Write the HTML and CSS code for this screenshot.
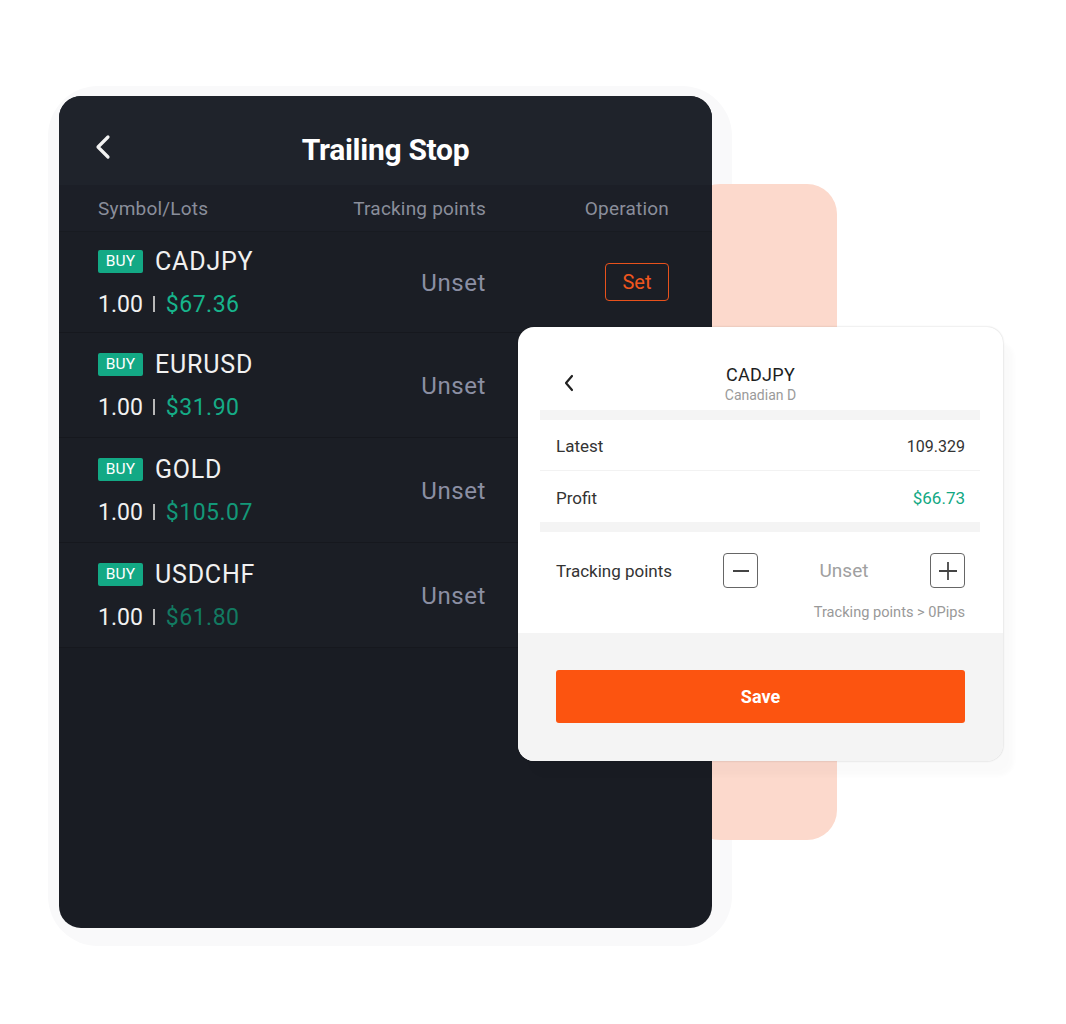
FILE: index.html
```html
<!DOCTYPE html>
<html lang="en">
<head>
<meta charset="utf-8">
<title>Trailing Stop</title>
<link rel="stylesheet" href="styles.css">
</head>
<body>
<div class="stage">
  <div class="halo"></div>
  <div class="pink"></div>

  <section class="phone">
    <header class="titlebar">
      <svg class="back" width="16" height="26" viewBox="0 0 16 26"><polyline points="13,3 3,13 13,23" fill="none" stroke="#f2f2f2" stroke-width="3.2" stroke-linecap="round" stroke-linejoin="round"/></svg>
      <h1 class="title">Trailing Stop</h1>
    </header>
    <div class="colhead">
      <span class="c1">Symbol/Lots</span>
      <span class="c2">Tracking points</span>
      <span class="c3">Operation</span>
    </div>
    <div class="row first">
      <div class="c1">
        <div class="sym"><span class="buy">BUY</span><span class="name">CADJPY</span></div>
        <div class="lots">1.00<i class="pipe"></i><span class="pl p1">$67.36</span></div>
      </div>
      <div class="c2 unset">Unset</div>
      <div class="c3"><span class="set">Set</span></div>
    </div>
    <div class="row">
      <div class="c1">
        <div class="sym"><span class="buy">BUY</span><span class="name">EURUSD</span></div>
        <div class="lots">1.00<i class="pipe"></i><span class="pl p2">$31.90</span></div>
      </div>
      <div class="c2 unset">Unset</div>
      <div class="c3"></div>
    </div>
    <div class="row">
      <div class="c1">
        <div class="sym"><span class="buy">BUY</span><span class="name">GOLD</span></div>
        <div class="lots">1.00<i class="pipe"></i><span class="pl p3">$105.07</span></div>
      </div>
      <div class="c2 unset">Unset</div>
      <div class="c3"></div>
    </div>
    <div class="row">
      <div class="c1">
        <div class="sym"><span class="buy">BUY</span><span class="name">USDCHF</span></div>
        <div class="lots">1.00<i class="pipe"></i><span class="pl p4">$61.80</span></div>
      </div>
      <div class="c2 unset">Unset</div>
      <div class="c3"></div>
    </div>
  </section>

  <section class="modal">
    <header class="mhead">
      <svg class="mback" width="12" height="18" viewBox="0 0 12 18"><polyline points="9,2 3,9 9,16" fill="none" stroke="#222" stroke-width="2.2" stroke-linecap="round" stroke-linejoin="round"/></svg>
      <div class="mtitle">
        <div class="mname">CADJPY</div>
        <div class="msub">Canadian D</div>
      </div>
    </header>
    <div class="gap"></div>
    <div class="kv divided"><span class="key">Latest</span><span class="val">109.329</span></div>
    <div class="kv"><span class="key">Profit</span><span class="val green">$66.73</span></div>
    <div class="gap"></div>
    <div class="track">
      <div class="trow">
        <span class="tlabel">Tracking points</span>
        <span class="step"><svg width="20" height="20" viewBox="0 0 20 20"><line x1="2" y1="10" x2="18" y2="10" stroke="#444" stroke-width="1.8"/></svg></span>
        <span class="tval">Unset</span>
        <span class="step"><svg width="20" height="20" viewBox="0 0 20 20"><line x1="1" y1="10" x2="19" y2="10" stroke="#444" stroke-width="1.8"/><line x1="10" y1="1" x2="10" y2="19" stroke="#444" stroke-width="1.8"/></svg></span>
      </div>
      <div class="hint">Tracking points &gt; 0Pips</div>
    </div>
    <footer class="mfoot">
      <div class="save">Save</div>
    </footer>
  </section>
</div>
</body>
</html>
```

FILE: styles.css
```css
* { box-sizing: border-box; margin: 0; padding: 0; }

body {
  background: #ffffff;
  font-family: Roboto, "Liberation Sans", Arial, sans-serif;
}

.stage {
  position: relative;
  width: 1066px;
  height: 1024px;
  overflow: hidden;
}

.halo {
  position: absolute;
  left: 48px;
  top: 86px;
  width: 684px;
  height: 860px;
  border-radius: 50px;
  background: #f9f9fa;
}

.pink {
  position: absolute;
  left: 690px;
  top: 184px;
  width: 147px;
  height: 656px;
  border-radius: 30px;
  background: #fcd9cc;
}

/* dark phone card */
.phone {
  position: absolute;
  left: 59px;
  top: 96px;
  width: 653px;
  height: 832px;
  border-radius: 22px;
  background: #191c23;
  overflow: hidden;
}

.titlebar {
  position: relative;
  height: 89px;
  background: #1f232b;
  display: flex;
  align-items: center;
  justify-content: center;
}

.back {
  position: absolute;
  left: 36px;
  top: 38px;
}

.title {
  font-size: 30px;
  font-weight: 700;
  color: #ffffff;
  letter-spacing: -0.3px;
  margin-top: 18px;
}

.colhead, .row {
  display: grid;
  grid-template-columns: 1fr 190px 183px;
  padding: 0 43px 0 39px;
  align-items: center;
}

.colhead {
  height: 47px;
  background: #1c1f27;
  border-bottom: 1px solid #181b21;
  font-size: 19px;
  letter-spacing: 0.2px;
  color: #8a8e9b;
}

.colhead .c2, .colhead .c3, .row .c2, .row .c3 { text-align: right; }

.row {
  height: 105px;
  background: #1b1e25;
  border-bottom: 1px solid #16181e;
}
.row.first { height: 101px; }

.sym {
  display: flex;
  align-items: center;
  gap: 12px;
}

.buy {
  display: inline-flex;
  align-items: center;
  justify-content: center;
  width: 45px;
  height: 23px;
  border-radius: 2px;
  background: #13a985;
  color: #ffffff;
  font-size: 15.5px;
  letter-spacing: 0.2px;
}

.name {
  font-size: 25px;
  color: #f1f1f1;
  letter-spacing: 0.8px;
}

.lots {
  margin-top: 15px;
  display: flex;
  align-items: center;
  font-size: 23px;
  color: #f1f1f1;
}

.pipe {
  display: inline-block;
  width: 2px;
  height: 16px;
  background: #b8b8b8;
  margin: 0 11px 0 10px;
}

.pl { letter-spacing: 0.5px; }
.p1 { color: #17b58c; }
.p2 { color: #15ac86; }
.p3 { color: #139878; }
.p4 { color: #127a61; }

.unset {
  font-size: 24px;
  color: #8b8fa3;
  letter-spacing: 0.6px;
  padding-top: 2px;
}

.set {
  display: inline-flex;
  align-items: center;
  justify-content: center;
  width: 64px;
  height: 38px;
  border: 1.5px solid #e8521c;
  border-radius: 4px;
  color: #f0561e;
  font-size: 20px;
  margin-top: -1px;
}

/* modal */
.modal {
  position: absolute;
  left: 518px;
  top: 327px;
  width: 485px;
  height: 434px;
  border-radius: 16px;
  background: #ffffff;
  overflow: hidden;
  box-shadow: 0 0 2px rgba(0, 0, 0, 0.22), 11px 15px 4px rgba(0, 0, 0, 0.02);
  display: flex;
  flex-direction: column;
}

.mhead {
  position: relative;
  height: 83px;
  display: flex;
  justify-content: center;
  padding-top: 37px;
}

.mback {
  position: absolute;
  left: 45px;
  top: 47px;
}

.mtitle { text-align: center; }

.mname {
  font-size: 18px;
  font-weight: 400;
  color: #1e1e1e;
  line-height: 22px;
  letter-spacing: 0.3px;
}

.msub {
  font-size: 14px;
  color: #9a9a9a;
  line-height: 18px;
}

.gap {
  height: 10px;
  margin: 0 23px 0 22px;
  background: #f4f4f4;
}

.kv {
  height: 51px;
  margin: 0 23px 0 22px;
  padding: 2px 15px 0 16px;
  display: flex;
  align-items: center;
  justify-content: space-between;
  font-size: 16px;
  color: #333;
}
.kv.divided { border-bottom: 1px solid #f2f2f2; }

.key { font-size: 17px; }
.val { color: #333; }
.green { color: #12a883; font-size: 17px; }

.track {
  height: 101px;
  padding: 21px 38px 0 38px;
}

.trow {
  display: flex;
  align-items: center;
}

.tlabel {
  font-size: 17px;
  color: #333;
  width: 167px;
}

.step {
  width: 35px;
  height: 35px;
  border: 1.5px solid #666;
  border-radius: 4px;
  display: inline-flex;
  align-items: center;
  justify-content: center;
}

.tval {
  flex: 1;
  text-align: center;
  font-size: 19px;
  color: #a0a0a0;
}

.hint {
  margin-top: 15px;
  text-align: right;
  font-size: 14.6px;
  color: #999;
}

.mfoot {
  flex: 1;
  background: #f4f4f4;
  padding: 37px 38px 0 38px;
}

.save {
  height: 53px;
  border-radius: 3px;
  background: #fc5410;
  color: #ffffff;
  font-size: 18px;
  font-weight: 700;
  display: flex;
  align-items: center;
  justify-content: center;
}
```
